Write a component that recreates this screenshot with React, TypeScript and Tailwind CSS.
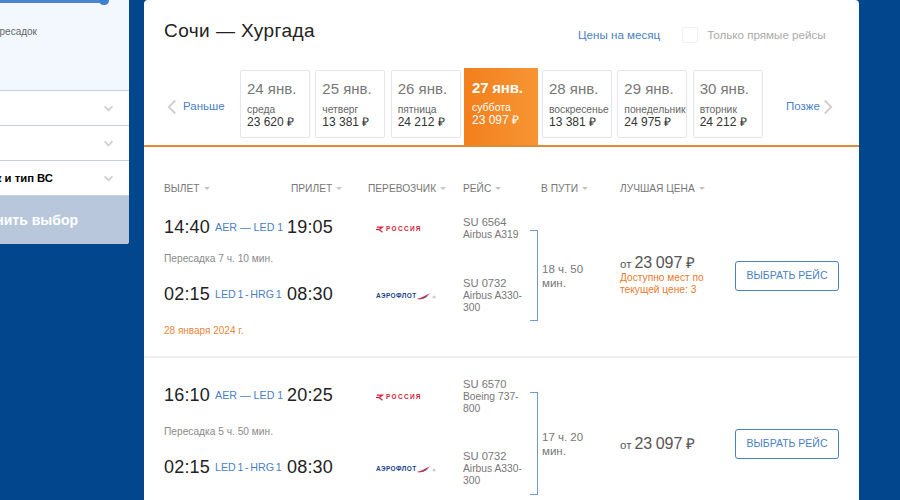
import React from "react";

const dates = [
  { d: "24 янв.", w: "среда", p: "23 620 ₽" },
  { d: "25 янв.", w: "четверг", p: "13 381 ₽" },
  { d: "26 янв.", w: "пятница", p: "24 212 ₽" },
  { d: "27 янв.", w: "суббота", p: "23 097 ₽", active: true },
  { d: "28 янв.", w: "воскресенье", p: "13 381 ₽" },
  { d: "29 янв.", w: "понедельник", p: "24 975 ₽" },
  { d: "30 янв.", w: "вторник", p: "24 212 ₽" },
];

function Chevron({ dir = "down", className = "" }: { dir?: "down" | "left" | "right"; className?: string }) {
  const d = dir === "down" ? "M2 4l5 5 5-5" : dir === "left" ? "M10 1L3 8l7 7" : "M4 1l7 7-7 7";
  return (
    <svg viewBox={dir === "down" ? "0 0 14 12" : "0 0 14 16"} className={className} fill="none" stroke="currentColor" strokeWidth="2">
      <path d={d} />
    </svg>
  );
}

function SideRow({ label }: { label?: string }) {
  return (
    <div className="flex h-[35px] items-center justify-end border-b border-[#c3cfdc] bg-white pr-[15px]">
      {label && <span className="mr-[50px] shrink-0 whitespace-nowrap text-[11.3px] font-bold text-black">{label}</span>}
      <Chevron className="h-[10px] w-[11px] shrink-0 text-[#c9ced3]" />
    </div>
  );
}

function Sidebar() {
  return (
    <aside className="h-[244px] w-[129px] shrink-0 overflow-hidden rounded-br-[3px] bg-[#f3f8fe]">
      <div className="relative h-[91px] border-b border-[#c3cfdc]">
        <div className="h-[3px] w-[100px] bg-[#4a86d0]" />
        <div className="absolute left-[99px] top-[-4px] h-[9px] w-[10px] rounded-full bg-[#3f80d0]" />
        <div className="flex justify-end pr-[92px] pt-[23px] text-[10px] leading-3 text-[#666]">
          <span className="whitespace-nowrap">пересадок</span>
        </div>
      </div>
      <SideRow />
      <SideRow />
      <SideRow label="Перевозчик и тип ВС" />
      <div className="flex h-[48px] items-center justify-end bg-[#b8c7dc] pr-[51px] text-[14px] font-bold text-white">
        <span className="whitespace-nowrap">Применить выбор</span>
      </div>
    </aside>
  );
}

function RossiyaLogo() {
  return (
    <div className="flex items-center gap-[2px] pt-[2px] text-[#d4213d]">
      <svg viewBox="0 0 10 8" className="h-[7px] w-[8px]" fill="none" stroke="currentColor" strokeWidth="1.6">
        <path d="M1 1h7L4 4l4 3.4" />
        <path d="M0 4h4" />
      </svg>
      <span className="text-[6.5px] font-bold leading-none tracking-[1.3px]">РОССИЯ</span>
    </div>
  );
}

function AeroflotLogo() {
  return (
    <div className="flex items-center pt-[2px] text-[#1c3f8a]">
      <span className="text-[6.5px] font-bold leading-none tracking-[0.4px]">АЭРОФЛОТ</span>
      <svg viewBox="0 0 20 8" className="h-[8px] w-[19px]">
        <path d="M0 7C5 6 9 3 14 1 11 4 7 7 2 7.6z" fill="#d5283f" />
        <path d="M3 7.5C7 6.5 10 4.5 12.5 3 10 5.5 7 7.4 3 7.5z" fill="#1c3f8a" />
        <circle cx="18" cy="5" r="1.6" fill="#c9ced6" />
      </svg>
    </div>
  );
}

type Seg = { dep: string; route: string; arr: string; logo: "r" | "a"; flight: string; plane: string };

function Segment({ dep, route, arr, logo, flight, plane }: Seg) {
  const tight = route.includes(" - ");
  return (
    <div className="flex items-center">
      <div className="flex w-[123px] shrink-0 items-center pb-[2px]">
        <span className="w-[51px] text-[18px] leading-6 tracking-[0.2px] text-[#222]">{dep}</span>
        <span className={`whitespace-nowrap text-[10.7px] text-[#4a7fc4] ${tight ? "[word-spacing:-1.3px]" : ""}`}>{route}</span>
      </div>
      <div className="w-[89px] shrink-0 pb-[2px] text-[18px] leading-6 tracking-[0.2px] text-[#222]">{arr}</div>
      <div className="w-[87px] shrink-0">{logo === "r" ? <RossiyaLogo /> : <AeroflotLogo />}</div>
      <div className="w-[67px] shrink-0 text-[#777]">
        <div className="text-[11.2px] leading-[13px]">{flight}</div>
        <div className="w-[62px] text-[10.3px] leading-[11.5px]">{plane}</div>
      </div>
    </div>
  );
}

function Flight({
  a,
  b,
  transfer,
  duration,
  seats,
  date,
  header,
}: {
  a: Seg;
  b: Seg;
  transfer: string;
  duration: string;
  seats?: boolean;
  date?: string;
  header?: boolean;
}) {
  return (
    <section className={header ? "px-5 pb-[19px]" : "px-5 pt-5"}>
      {header && (
        <div className="mb-[18px] mt-[34px] flex h-4 items-center text-[10.2px] uppercase text-[#777]">
          {[
            ["Вылет", "w-[127px]"],
            ["Прилет", "w-[77px]"],
            ["Перевозчик", "w-[95px]"],
            ["Рейс", "w-[78px]"],
            ["В пути", "w-[79px]"],
            ["Лучшая цена", ""],
          ].map(([t, w]) => (
            <div key={t} className={`flex items-center gap-[4px] ${w}`}>
              {t}
              <span className="h-0 w-0 border-x-[3px] border-t-[3px] border-x-transparent border-t-[#c4c4c4]" />
            </div>
          ))}
        </div>
      )}
      <div className="flex">
        <div className="w-[366px] shrink-0">
          <Segment {...a} />
          <div className="flex h-9 items-center text-[10.2px] text-[#8a8a8a]">{transfer}</div>
          <Segment {...b} />
        </div>
        <div className={`${header ? "mt-[15px] mb-[-8px]" : "mt-[14px] mb-[-9px]"} flex flex-1 items-center`}>
          <div className="h-full w-2 shrink-0 self-stretch border-y border-r border-[#6f9bd0]" />
          <div className="ml-1 w-[60px] shrink-0 pt-[2px] text-[11.5px] leading-[13.5px] text-[#777]">{duration}</div>
          <div className={`ml-[18px] w-[115px] shrink-0 ${seats ? "pb-[1px]" : "pt-[1px]"}`}>
            <div className="flex items-baseline text-[#555]">
              <span className="text-[11.5px] leading-4">от</span>
              <span className="ml-[3px] text-[16px] leading-4 [word-spacing:-1px]">23 097</span>
              <span className="ml-[4px] text-[15px] leading-4">₽</span>
            </div>
            {seats && <div className="w-[90px] text-[10.2px] leading-[11.5px] text-[#ea7a2a]">Доступно мест по текущей цене: 3</div>}
          </div>
          <button className="flex h-[30px] w-[104px] shrink-0 items-center justify-center rounded-[3px] border border-[#4a80c4] bg-white text-[10.5px] font-medium text-[#4a7fc4]">
            ВЫБРАТЬ РЕЙС
          </button>
        </div>
      </div>
      {date && <div className="mt-[12px] text-[10px] leading-3 text-[#e8873a]">{date}</div>}
    </section>
  );
}

export default function App() {
  const seg2: Seg = { dep: "02:15", route: "LED 1 - HRG 1", arr: "08:30", logo: "a", flight: "SU 0732", plane: "Airbus A330-300" };
  return (
    <div className="flex h-[500px] w-[900px] items-start overflow-hidden bg-[#02478e] font-['Liberation_Sans',Arial,sans-serif]">
      <Sidebar />
      <main className="ml-[15px] h-[500px] w-[715px] shrink-0 overflow-hidden rounded-t-[4px] bg-white">
        <div className="flex h-[68px] items-start px-5 pt-[20px]">
          <h1 className="w-[151px] shrink-0 whitespace-nowrap text-[19px] leading-[22px] tracking-[0.45px] text-[#222]">Сочи — Хургада</h1>
          <a className="ml-[263px] mt-[8px] text-[11.6px] leading-[14px] text-[#4a7fc4]">Цены на месяц</a>
          <span className="ml-[22px] mt-[7px] h-4 w-4 rounded-[2px] border border-[#eef0f2]" />
          <span className="ml-[9px] mt-[8px] text-[11.6px] leading-[14px] text-[#aaa]">Только прямые рейсы</span>
        </div>
        <div className="flex h-[79px] border-b-2 border-[#e08a33]">
          <div className="flex h-[68px] w-[96px] shrink-0 items-center pl-[22px] pt-[9px]">
            <Chevron dir="left" className="h-[16px] w-[13px] text-[#cfcfcf]" />
            <span className="ml-[4px] text-[11.5px] text-[#4a7fc4]">Раньше</span>
          </div>
          <div className="flex items-start">
            {dates.map((x) =>
              x.active ? (
                <div key={x.d} className="ml-[-2px] mr-[4px] h-[77px] w-[74px] bg-gradient-to-r from-[#f27f1b] to-[#f79533] pl-[8px] pt-[10px] text-white">
                  <div className="text-[15px] font-bold leading-[20px] tracking-[-0.2px]">{x.d}</div>
                  <div className="mt-[3px] text-[10.5px] leading-[13px]">{x.w}</div>
                  <div className="text-[12px] leading-[13px]">{x.p}</div>
                </div>
              ) : (
                <div key={x.d} className="mr-[5.33px] mt-[2px] h-[68px] w-[70px] rounded-[2px] border border-[#e3e6ea] pl-[6px] pt-[8px]">
                  <div className="text-[15px] leading-[20px] text-[#777]">{x.d}</div>
                  <div className="mt-[4px] whitespace-nowrap text-[10.3px] leading-[13px] text-[#666]">{x.w}</div>
                  <div className="text-[12px] leading-[13px] text-[#333]">{x.p}</div>
                </div>
              )
            )}
          </div>
          <div className="flex h-[68px] items-center pl-[18px] pt-[10px]">
            <span className="text-[11.5px] text-[#4a7fc4]">Позже</span>
            <Chevron dir="right" className="ml-[1px] h-[16px] w-[13px] text-[#cfcfcf]" />
          </div>
        </div>
        <div className="border-b-2 border-[#eef0f2]">
          <Flight
            header
            a={{ dep: "14:40", route: "AER — LED 1", arr: "19:05", logo: "r", flight: "SU 6564", plane: "Airbus A319" }}
            b={seg2}
            transfer="Пересадка 7 ч. 10 мин."
            duration="18 ч. 50 мин."
            seats
            date="28 января 2024 г."
          />
        </div>
        <Flight
          a={{ dep: "16:10", route: "AER — LED 1", arr: "20:25", logo: "r", flight: "SU 6570", plane: "Boeing 737-800" }}
          b={seg2}
          transfer="Пересадка 5 ч. 50 мин."
          duration="17 ч. 20 мин."
        />
      </main>
    </div>
  );
}
